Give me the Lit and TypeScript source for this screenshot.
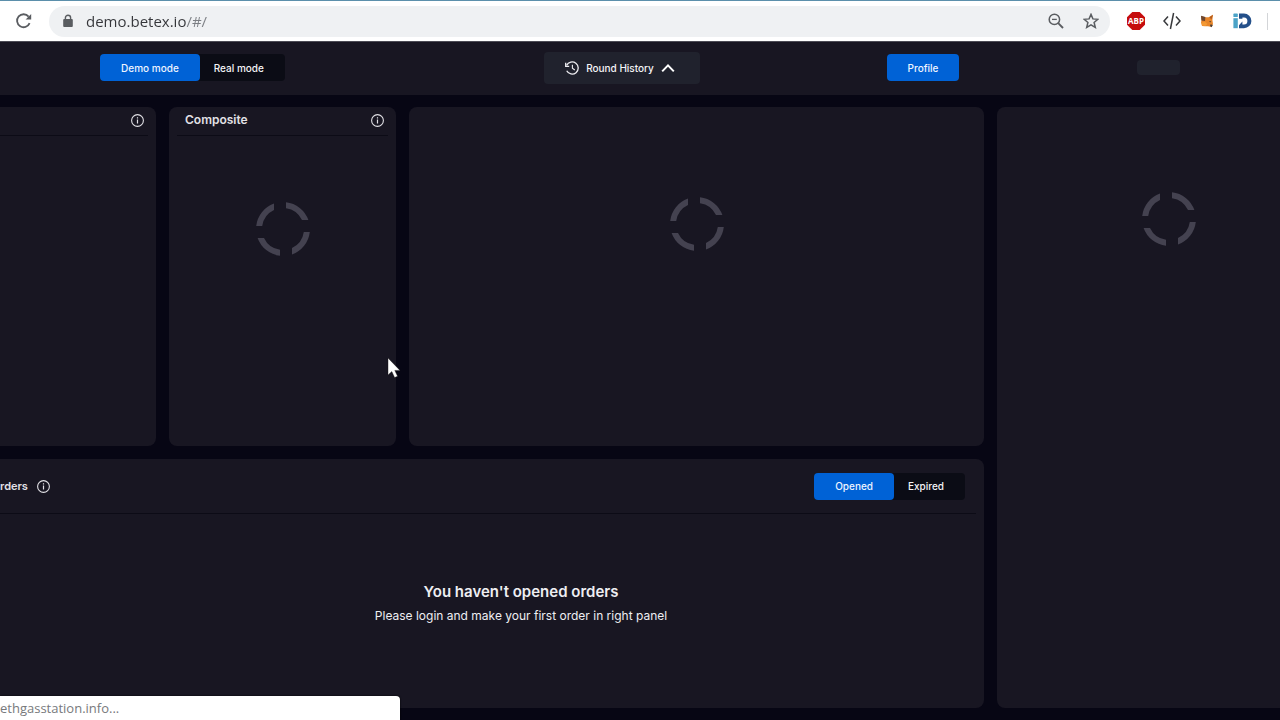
import { LitElement, html, svg, css } from "lit";
import { customElement, property } from "lit/decorators.js";

@customElement("info-icon")
class InfoIcon extends LitElement {
  static styles = css`
    :host { display: inline-flex; }
    button { display: flex; border: 0; padding: 0; background: none; color: #e2e1e6; cursor: pointer; }
  `;
  render() {
    return html`<button aria-label="Information">
      <svg width="13" height="13" viewBox="0 0 13 13" fill="none" stroke="currentColor">
        <circle cx="6.5" cy="6.5" r="5.9" stroke-width="1.1" />
        <path d="M6.5 5.6V9.6M6.5 3.3V4.5" stroke-width="1.2" />
      </svg>
    </button>`;
  }
}

@customElement("ring-loader")
class RingLoader extends LitElement {
  static styles = css`
    :host { display: flex; justify-content: center; }
    svg { fill: #444250; }
  `;
  render() {
    return html`<svg width="54" height="54" viewBox="-27 -27 54 54" role="img" aria-label="Loading">
      ${[0, 90, 180, 270].map(
        (a) => svg`<path transform="rotate(${a})" d="M3 -26.8A27 27 0 0 1 25.4 -9H19A21 21 0 0 0 3 -20.8Z" />`
      )}
    </svg>`;
  }
}

@customElement("mode-switch")
class ModeSwitch extends LitElement {
  @property({ type: Array }) options: string[] = [];
  @property({ type: Number }) selected = 0;
  static styles = css`
    :host { display: flex; background: #0b0c15; border-radius: 4px; }
    button {
      height: 27px; border: 0; border-radius: 4px; padding: 0 21px 0 14px;
      background: none; color: #f4f4f7; cursor: pointer;
      font: 500 10px/16px Inter, "Liberation Sans", sans-serif;
    }
    .on { background: #0062d6; padding: 0 21px; color: #eef4ff; }
  `;
  render() {
    return this.options.map(
      (o, i) => html`<button
        class=${i === this.selected ? "on" : ""}
        aria-pressed=${i === this.selected}
        @click=${() => (this.selected = i)}>${o}</button>`
    );
  }
}

@customElement("browser-bar")
class BrowserBar extends LitElement {
  static styles = css`
    :host {
      display: flex; align-items: center; box-sizing: border-box; height: 42px;
      padding: 0 12px 0 15px; background: #fff;
      border-top: 1px solid #5b8fab; border-bottom: 1px solid #4c4b55;
    }
    svg { display: block; flex: none; }
    button { display: flex; border: 0; padding: 0; background: none; cursor: pointer; }
    .omni {
      display: flex; align-items: center; flex: 1; height: 31px; margin: 0 17px 0 16px;
      padding: 0 11px 0 13px; border-radius: 16px; background: #eff1f3;
    }
    input {
      flex: 1; min-width: 0; margin-left: 12px; padding: 0; border: 0; outline: 0; height: 24px;
      font: 15px/24px "Open Sans", "Noto Sans", sans-serif; color: #35363a;
      background: linear-gradient(90deg, #35363a 100px, #7b7e83 100px);
      -webkit-background-clip: text; background-clip: text; -webkit-text-fill-color: transparent;
    }
    .tools { display: flex; gap: 19px; }
    .ext { display: flex; align-items: center; gap: 18px; }
    .sep { width: 1px; height: 17px; margin-left: 15px; background: #d3d5d8; }
  `;
  render() {
    return html`
      <button aria-label="Reload">
        <svg width="18" height="18" viewBox="0 0 18 18" fill="none">
          <path d="M14.6 11.2A6.5 6.5 0 1 1 13.6 4.6" stroke="#5a5d61" stroke-width="1.8" />
          <path d="M16.2 2V7.6H10.6Z" fill="#5a5d61" />
        </svg>
      </button>
      <div class="omni">
        <svg width="12" height="14" viewBox="0 0 12 14">
          <rect x="1.2" y="5" width="9.6" height="8" rx="1" fill="#5a5d61" />
          <path d="M3.4 5.4V3.8A2.6 2.6 0 0 1 8.6 3.8V5.4" fill="none" stroke="#5a5d61" stroke-width="1.4" />
        </svg>
        <input aria-label="Address" value="demo.betex.io/#/" spellcheck="false" />
        <div class="tools">
          <button aria-label="Zoom out">
            <svg width="16" height="16" viewBox="0 0 16 16" fill="none" stroke="#5a5d61">
              <circle cx="6.4" cy="6.4" r="5.2" stroke-width="1.5" />
              <path d="M10.2 10.2L15 15" stroke-width="1.9" />
              <path d="M4 6.4H8.8" stroke-width="1.3" />
            </svg>
          </button>
          <button aria-label="Bookmark">
            <svg width="16" height="16" viewBox="0 0 16 16" fill="none" stroke="#5a5d61" stroke-width="1.5">
              <path d="M8 1.4L9.9 5.9L14.9 6.3L11.1 9.5L12.3 14.4L8 11.8L3.7 14.4L4.9 9.5L1.1 6.3L6.1 5.9Z" />
            </svg>
          </button>
        </div>
      </div>
      <div class="ext">
        <button aria-label="Ad blocker">
          <svg width="18" height="18" viewBox="0 0 18 18">
            <path d="M5.3 0H12.7L18 5.3V12.7L12.7 18H5.3L0 12.7V5.3Z" fill="#c60d0d" />
            <text x="9" y="12" text-anchor="middle" font-family="Open Sans, sans-serif" font-size="8" font-weight="700" fill="#fff">ABP</text>
          </svg>
        </button>
        <button aria-label="Code">
          <svg width="18" height="18" viewBox="0 0 18 18" fill="none" stroke="#38393c" stroke-width="1.5">
            <path d="M5 4.5L1 9L5 13.5M13 4.5L17 9L13 13.5M10.6 1L7.4 17" />
          </svg>
        </button>
        <button aria-label="Wallet">
          <svg width="16" height="16" viewBox="0 0 16 16">
            <path d="M2 3L6 4.2H9.6L14 1.8L13.4 7L14 11L12.6 14L9 13.2H6L3 13L2 9.4L2.6 7Z" fill="#e8862a" />
            <path d="M2 2.8L6.4 4L6 8L2.4 7.4Z" fill="#6b4630" />
            <path d="M14 1.8L10.4 4.2L12.4 6.4Z" fill="#b35c20" />
            <path d="M10 8.6L12.2 8L11.4 9.6ZM11.6 11.2L13.8 12L12.6 14.2L11 13Z" fill="#4d4037" />
            <path d="M6 8.4L8.4 11L6.4 13L3 12.6L2.6 9.6Z" fill="#f49a34" />
          </svg>
        </button>
        <button aria-label="Identity">
          <svg width="19" height="18" viewBox="0 0 19 18">
            <rect x="0.4" y="1.6" width="4.4" height="3.4" rx="0.6" fill="#4ba3c7" />
            <rect x="0.4" y="6.2" width="4.4" height="10" fill="#4ba3c7" />
            <path fill-rule="evenodd" d="M6 1.6H11A7.4 7.3 0 0 1 11 16.2H6V13.2L9.4 9.6V12.4H11A3.4 3.5 0 0 0 11 5.4H9.4V6.8H6Z" fill="#24508a" />
          </svg>
        </button>
      </div>
      <div class="sep"></div>
    `;
  }
}

@customElement("app-root")
class AppRoot extends LitElement {
  static styles = css`
    :host {
      display: flex; flex-direction: column; position: relative; box-sizing: border-box;
      min-height: 100vh; overflow: hidden; background: #070614; color: #eeeef2;
      font-family: Inter, "Liberation Sans", sans-serif;
    }
    header {
      display: grid; grid-template-columns: 385px 1fr 128px 293px; align-items: center;
      justify-items: center; box-sizing: border-box; height: 53px; padding-bottom: 2px; background: #181622;
    }
    .btn {
      display: flex; align-items: center; justify-content: center; border: 0; border-radius: 4px;
      color: #f4f4f7; font: 500 10px/16px Inter, "Liberation Sans", sans-serif; cursor: pointer;
    }
    .history { height: 32px; padding: 0 25px 0 21px; gap: 7px; background: #20222d; }
    .profile { height: 27px; padding: 0 21px; background: #0062d6; color: #eef4ff; }
    .stub { justify-self: start; margin-left: 150px; width: 43px; height: 15px; border-radius: 4px; background: #20222d; }
    main {
      flex: 1; display: grid; grid-template-columns: 156px 227px 1fr 283px;
      grid-template-rows: 339fr 249fr; gap: 13px; padding: 12px 0;
    }
    section { display: flex; flex-direction: column; padding: 0 8px; border-radius: 8px; background: #181622; }
    .first { padding-left: 0; border-radius: 0 8px 8px 0; }
    .side { grid-column: 4; grid-row: 1 / 3; align-items: start; padding: 85px 0 0 145px; border-radius: 8px 0 0 8px; }
    .chart { padding-top: 90px; }
    .orders { grid-column: 1 / 4; padding-left: 0; border-radius: 0 8px 8px 0; }
    .head {
      display: flex; align-items: center; justify-content: space-between; box-sizing: border-box;
      height: 29px; padding: 0 4px 2px 8px; border-bottom: 1px solid #0c0b16;
    }
    .head.end { justify-content: flex-end; }
    h2 { margin: 0; font-size: 12px; line-height: 18px; font-weight: 600; color: #e2e1e6; }
    .load { margin-top: 66px; }
    .orders .head { height: 55px; padding: 0 11px 0 0; }
    .title { display: flex; align-items: center; gap: 9px; }
    .title h2 { font-size: 11px; }
    .empty { flex: 1; display: flex; flex-direction: column; align-items: center; justify-content: center; gap: 4px; padding: 0 0 17px 66px; }
    .empty h3 { margin: 0; font-size: 15px; line-height: 22px; font-weight: 600; }
    .empty p { margin: 0; font-size: 12px; line-height: 18px; }
    .status {
      position: absolute; left: 0; bottom: 0; box-sizing: border-box; width: 400px; height: 24px;
      border-top-right-radius: 4px; background: #fff; box-shadow: 0 0 2px #000; color: #77797c;
      font: 13px/24px "Open Sans", "Noto Sans", sans-serif;
    }
    .cursor { position: absolute; left: 387px; top: 357px; }
  `;
  render() {
    return html`
      <browser-bar></browser-bar>
      <header>
        <mode-switch .options=${["Demo mode", "Real mode"]}></mode-switch>
        <button class="btn history">
          <svg width="14" height="14" viewBox="0 0 14 14" fill="none" stroke="#eeeef2">
            <path d="M1.6 4.4A6.1 6.1 0 1 1 1.7 9.8" stroke-width="1.3" />
            <path d="M0.7 1.8V5.3H4.2" stroke-width="1.3" />
            <path d="M7.4 3.8V7.3L9.8 9" stroke-width="1.1" />
          </svg>
          <span>Round History</span>
          <svg width="14" height="10" viewBox="0 0 14 10" fill="none" stroke="#fff">
            <path d="M1.2 8.4L7 2.4L12.8 8.4" stroke-width="2" />
          </svg>
        </button>
        <button class="btn profile">Profile</button>
        <div class="stub"></div>
      </header>
      <main>
        <section class="first"><div class="head end"><info-icon></info-icon></div></section>
        <section>
          <div class="head"><h2>Composite</h2><info-icon></info-icon></div>
          <ring-loader class="load"></ring-loader>
        </section>
        <section class="chart"><ring-loader></ring-loader></section>
        <section class="side"><ring-loader></ring-loader></section>
        <section class="orders">
          <div class="head">
            <div class="title"><h2>rders</h2><info-icon></info-icon></div>
            <mode-switch .options=${["Opened", "Expired"]}></mode-switch>
          </div>
          <div class="empty">
            <h3>You haven't opened orders</h3>
            <p>Please login and make your first order in right panel</p>
          </div>
        </section>
      </main>
      <div class="status">ethgasstation.info...</div>
      <svg class="cursor" width="15" height="22" viewBox="0 0 15 22">
        <path d="M1 1V18L4.8 14.6L7.6 20.6L10.6 19.3L7.8 13.4H13Z" fill="#fff" stroke="#111" stroke-width="0.4" />
      </svg>
    `;
  }
}
